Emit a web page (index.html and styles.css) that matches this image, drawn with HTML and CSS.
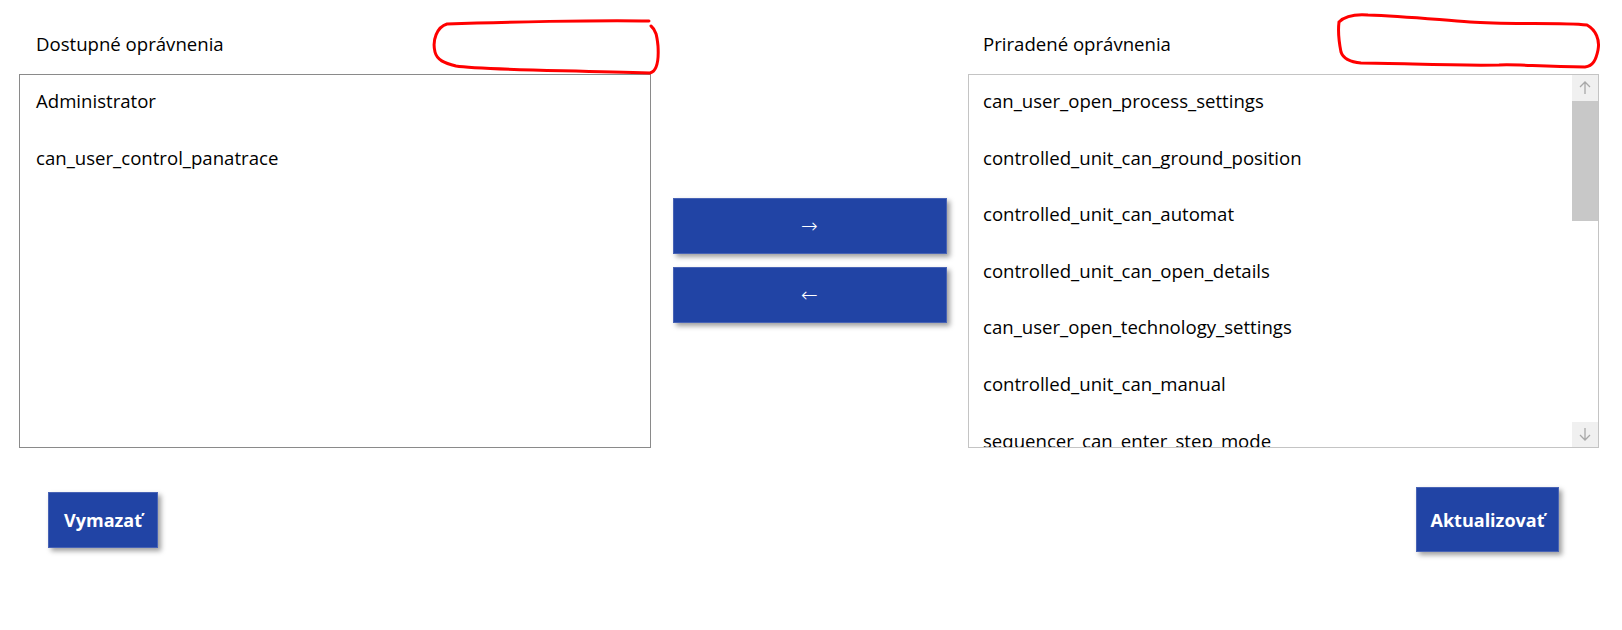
FILE: index.html
```html
<!DOCTYPE html>
<html lang="sk">
<head>
<meta charset="utf-8">
<title>Oprávnenia</title>
<link rel="stylesheet" href="styles.css">
</head>
<body>
<div class="app">
  <div class="panels">
    <section class="col col-left">
      <div class="title">Dostupné oprávnenia</div>
      <div class="box box-left">
        <ul class="list">
          <li>Administrator</li>
          <li>can_user_control_panatrace</li>
        </ul>
      </div>
    </section>
    <section class="col col-mid">
      <button class="btn btn-move"><span class="arrow">→</span></button>
      <button class="btn btn-move"><span class="arrow">←</span></button>
    </section>
    <section class="col col-right">
      <div class="title title-right">Priradené oprávnenia</div>
      <div class="box box-right">
        <ul class="list list-right">
          <li>can_user_open_process_settings</li>
          <li>controlled_unit_can_ground_position</li>
          <li>controlled_unit_can_automat</li>
          <li>controlled_unit_can_open_details</li>
          <li>can_user_open_technology_settings</li>
          <li>controlled_unit_can_manual</li>
          <li>sequencer_can_enter_step_mode</li>
        </ul>
        <div class="scrollbar">
          <div class="sb-btn">
            <svg width="26" height="26" viewBox="0 0 26 26"><path d="M13 19V7M8 12l5-5 5 5" fill="none" stroke="#a8a8a8" stroke-width="1.3"/></svg>
          </div>
          <div class="sb-thumb"></div>
          <div class="sb-track"></div>
          <div class="sb-btn">
            <svg width="26" height="25" viewBox="0 0 26 25"><path d="M13 6v12M8 13l5 5 5-5" fill="none" stroke="#a8a8a8" stroke-width="1.3"/></svg>
          </div>
        </div>
      </div>
    </section>
  </div>
  <div class="footer">
    <button class="btn btn-action btn-clear">Vymazať</button>
    <button class="btn btn-action btn-update">Aktualizovať</button>
  </div>
  <svg class="marks" width="1622" height="630" viewBox="0 0 1622 630">
    <path d="M649 21 C600 20 500 22 447 24 C437 27 432 40 435 52 C437 60 444 63 456 66 C480 70 560 70 650 73 C657 71 659 62 658 46 C657 36 656 30 651 26" />
    <path d="M1339 22 C1345 16 1355 14 1368 15 C1400 16 1430 19 1470 22 C1510 25 1560 22 1587 25 C1596 30 1600 40 1598 50 C1596 60 1593 66 1585 67 C1540 67 1520 64 1499 65 C1450 66 1400 63 1361 63 C1350 62 1343 58 1341 52 C1339 42 1338 30 1339 22" />
  </svg>
</div>
</body>
</html>
```

FILE: styles.css
```css
html, body {
  margin: 0;
  padding: 0;
  background: #ffffff;
}

body {
  font-family: "Open Sans", "Noto Sans", "DejaVu Sans", sans-serif;
  color: #000000;
}

.app {
  position: relative;
  width: 1622px;
  height: 630px;
  overflow: hidden;
}

.panels {
  display: flex;
  padding: 31px 0 0 19px;
}

.col {
  display: flex;
  flex-direction: column;
}

.col-left {
  width: 632px;
}

.col-mid {
  width: 317px;
  align-items: center;
  padding-top: 167px;
  gap: 13px;
}

.col-right {
  width: 631px;
}

.title {
  font-size: 18.6px;
  font-weight: 500;
  line-height: 25px;
  padding-left: 17px;
  margin-bottom: 18px;
}

.title-right {
  padding-left: 15px;
}

.box {
  box-sizing: border-box;
  height: 374px;
  display: flex;
  background: #ffffff;
}

.box-left {
  border: 1px solid #8a8a8a;
}

.box-right {
  border: 1px solid #c4c4c4;
}

.list {
  list-style: none;
  margin: 0;
  padding: 0 0 0 16px;
  flex: 1;
  overflow: hidden;
  font-size: 18.6px;
  font-weight: 500;
}

.list-right {
  padding-left: 14px;
}

.list li {
  line-height: 24px;
  padding: 14px 0 18.6px;
  white-space: nowrap;
}

.scrollbar {
  width: 26px;
  display: flex;
  flex-direction: column;
  background: #ffffff;
}

.sb-btn {
  height: 26px;
  background: #f0f0f0;
  display: flex;
}

.sb-btn:last-child {
  height: 25px;
}

.sb-thumb {
  height: 120px;
  background: #c8c8c8;
}

.sb-track {
  flex: 1;
}

.btn {
  font-family: inherit;
  background: #2144a5;
  color: #ffffff;
  border: 1px solid #4863b5;
  box-shadow: 3px 3px 5px rgba(0, 0, 0, 0.38);
  padding: 0;
  margin: 0;
  cursor: pointer;
}

.btn-move {
  width: 274px;
  height: 56px;
}

.arrow {
  font-family: "DejaVu Sans", sans-serif;
  font-size: 20px;
  font-weight: 300;
}

.footer {
  display: flex;
  justify-content: space-between;
  align-items: center;
  padding: 0 63px 0 48px;
  margin-top: 39px;
}

.btn-action {
  font-size: 18px;
  font-weight: 700;
}

.btn-clear {
  width: 110px;
  height: 56px;
}

.btn-update {
  width: 143px;
  height: 65px;
}

.marks {
  position: absolute;
  left: 0;
  top: 0;
  pointer-events: none;
}

.marks path {
  fill: none;
  stroke: #ff0000;
  stroke-width: 3;
  stroke-linecap: round;
  stroke-linejoin: round;
}
```
